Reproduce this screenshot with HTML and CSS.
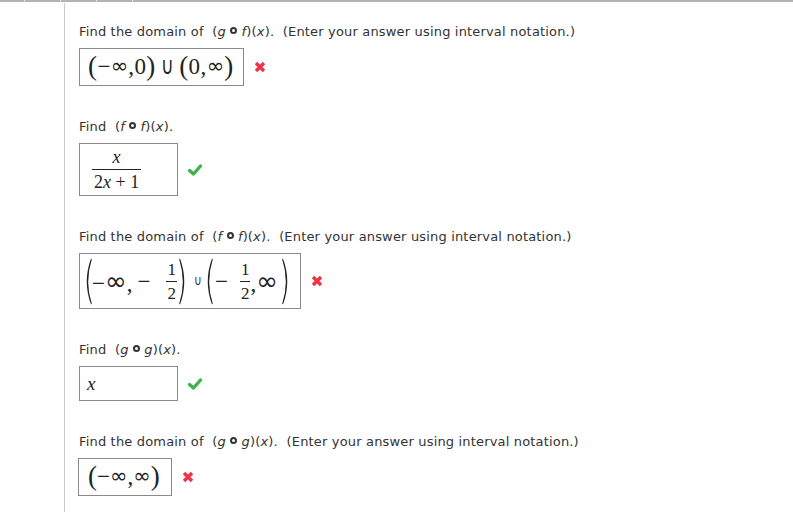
FILE: index.html
```html
<!DOCTYPE html>
<html lang="en">
<head>
<meta charset="utf-8">
<title>Composite functions</title>
<link rel="stylesheet" href="styles.css">
</head>
<body>
<div class="topbar">
  <span class="seg"></span><span class="seg"></span><span class="seg"></span><span class="seg"></span><span class="rest"></span>
</div>
<main class="page">
  <section class="q">
    <p class="prompt">Find the domain of&nbsp; (<i>g</i> <span class="ring"></span> <i>f</i>)(<i>x</i>).&nbsp; (Enter your answer using interval notation.)</p>
    <div class="answer">
      <div class="box box1 math"><span class="p">(</span>−<span class="inf">∞</span>,0<span class="p">)</span><span class="cup">∪</span><span class="p">(</span>0,<span class="inf">∞</span><span class="p">)</span></div>
      <svg class="mark cross" width="14" height="14" viewBox="0 0 14 14"><path d="M3 3 L11 11 M11 3 L3 11"/></svg>
    </div>
  </section>

  <section class="q">
    <p class="prompt">Find&nbsp; (<i>f</i> <span class="ring"></span> <i>f</i>)(<i>x</i>).</p>
    <div class="answer">
      <div class="box box2 math">
        <span class="frac"><span class="num"><i>x</i></span><span class="den">2<i>x</i> + 1</span></span>
      </div>
      <svg class="mark check" width="16" height="14" viewBox="0 0 16 14"><path d="M2.5 7.5 L6.5 11 L13.5 3"/></svg>
    </div>
  </section>

  <section class="q">
    <p class="prompt">Find the domain of&nbsp; (<i>f</i> <span class="ring"></span> <i>f</i>)(<i>x</i>).&nbsp; (Enter your answer using interval notation.)</p>
    <div class="answer">
      <div class="box box3 math">
        <svg class="bigp" width="10" height="47" viewBox="0 0 10 47"><path d="M9 0.5 Q0.5 23.5 9 46.5 L9.8 45.8 Q2.6 23.5 9.8 1.2 Z"/></svg>
        <span class="t">−<span class="inf">∞</span>,</span>
        <span class="t minus">−</span>
        <span class="frac small f1"><span class="num">1</span><span class="den">2</span></span>
        <svg class="bigp p2" width="10" height="47" viewBox="0 0 10 47"><path d="M1 0.5 Q9.5 23.5 1 46.5 L0.2 45.8 Q7.4 23.5 0.2 1.2 Z"/></svg>
        <span class="cup">∪</span>
        <svg class="bigp" width="10" height="47" viewBox="0 0 10 47"><path d="M9 0.5 Q0.5 23.5 9 46.5 L9.8 45.8 Q2.6 23.5 9.8 1.2 Z"/></svg>
        <span class="t minus2">−</span>
        <span class="frac small f2"><span class="num">1</span><span class="den">2</span></span>
        <span class="t">,<span class="inf">∞</span></span>
        <svg class="bigp p4" width="10" height="47" viewBox="0 0 10 47"><path d="M1 0.5 Q9.5 23.5 1 46.5 L0.2 45.8 Q7.4 23.5 0.2 1.2 Z"/></svg>
      </div>
      <svg class="mark cross" width="14" height="14" viewBox="0 0 14 14"><path d="M3 3 L11 11 M11 3 L3 11"/></svg>
    </div>
  </section>

  <section class="q">
    <p class="prompt">Find&nbsp; (<i>g</i> <span class="ring"></span> <i>g</i>)(<i>x</i>).</p>
    <div class="answer">
      <div class="box box4 math"><i>x</i></div>
      <svg class="mark check" width="16" height="14" viewBox="0 0 16 14"><path d="M2.5 7.5 L6.5 11 L13.5 3"/></svg>
    </div>
  </section>

  <section class="q">
    <p class="prompt">Find the domain of&nbsp; (<i>g</i> <span class="ring"></span> <i>g</i>)(<i>x</i>).&nbsp; (Enter your answer using interval notation.)</p>
    <div class="answer">
      <div class="box box5 math"><span class="p">(</span>−<span class="inf">∞</span>,<span class="inf">∞</span><span class="p">)</span></div>
      <svg class="mark cross" width="14" height="14" viewBox="0 0 14 14"><path d="M3 3 L11 11 M11 3 L3 11"/></svg>
    </div>
  </section>
</main>
</body>
</html>
```

FILE: styles.css
```css
html, body {
  margin: 0;
  padding: 0;
  background: #ffffff;
}

body {
  font-family: "DejaVu Sans", Verdana, sans-serif;
  font-size: 13px;
  color: #333333;
}

.topbar {
  display: flex;
  height: 2px;
  background: #b4b4b4;
}

.topbar .seg {
  width: 35px;
  border-right: 1px solid #e4e4e4;
}

.topbar .seg:first-child {
  width: 24px;
}

.topbar .rest {
  flex: 1;
}

.page {
  margin: 1px 0 0 64px;
  border-left: 1px solid #cccccc;
  padding: 21px 0 0 14px;
  min-height: 490px;
}

.q {
  margin-bottom: 33px;
}

.prompt {
  margin: 0 0 8px 0;
  line-height: 16px;
  white-space: pre;
  letter-spacing: 0.17px;
}

.ring {
  display: inline-block;
  width: 3px;
  height: 3px;
  border: 2px solid #333333;
  border-radius: 50%;
  vertical-align: 2px;
}

.answer {
  display: flex;
  align-items: center;
}

.box {
  box-sizing: border-box;
  border: 1px solid #8a8a8a;
  display: flex;
  align-items: center;
}

.math {
  font-family: "Liberation Serif", "Times New Roman", serif;
  color: #222222;
  font-size: 23px;
  white-space: nowrap;
}

.math i {
  font-family: "Liberation Serif", "Times New Roman", serif;
  font-style: italic;
}

.math .inf {
  font-family: "DejaVu Sans", sans-serif;
  font-size: 21px;
  letter-spacing: 0;
  position: relative;
  top: -1px;
}

.math .p {
  font-size: 27px;
  line-height: 1;
  position: relative;
  top: -1px;
}

.math .cup {
  display: inline-block;
  font-family: "DejaVu Sans", sans-serif;
  font-weight: 200;
  font-size: 19px;
  margin: 0 5px 0 4px;
  transform: scale(0.9, 1.25);
  transform-origin: 50% 75%;
}

.box1 {
  width: 165px;
  height: 38px;
  padding-left: 8px;
  letter-spacing: 0.4px;
}

.box2 {
  width: 99px;
  height: 53px;
  padding-left: 12px;
  font-size: 18px;
}

.box3 {
  width: 222px;
  height: 56px;
  padding-left: 2px;
}

.box4 {
  width: 99px;
  height: 35px;
  padding-left: 7px;
  font-size: 19px;
}

.box5 {
  width: 94px;
  height: 38px;
  padding-left: 9px;
  margin-left: -1px;
}

.frac {
  display: inline-flex;
  flex-direction: column;
  align-items: center;
  line-height: 1;
}

.frac .num {
  padding: 0 2px 3px;
}

.frac .den {
  border-top: 1px solid #222222;
  padding: 3px 2px 0;
  align-self: stretch;
  text-align: center;
}

.frac.small {
  font-size: 17px;
}

.frac.small .num {
  padding: 0 1px 3px;
}

.frac.small .den {
  padding: 3px 1px 0;
}

.box3 .t {
  position: relative;
  top: 1px;
}

.box3 .inf {
  font-size: 26px;
}

.box3 .minus {
  margin-left: 5px;
}

.box3 .f1 {
  margin-left: 16px;
}

.box3 .p2 {
  margin-left: 2px;
}

.box3 .cup {
  font-size: 12px;
  margin: 0 0 0 5px;
  transform: scale(0.9, 1.2);
}

.box3 .minus2 {
  margin-left: 2px;
}

.box3 .f2 {
  margin-left: 12px;
}

.box3 .p4 {
  margin-left: 4px;
}

.bigp {
  fill: #222222;
  flex: none;
}

.mark {
  flex: none;
  margin-left: 9px;
  fill: none;
}

.mark.cross path {
  stroke: #ee3347;
  stroke-width: 3.4;
  stroke-linecap: butt;
}

.mark.check path {
  stroke: #3fb24f;
  stroke-width: 3.4;
  stroke-linecap: round;
  stroke-linejoin: round;
}
```
